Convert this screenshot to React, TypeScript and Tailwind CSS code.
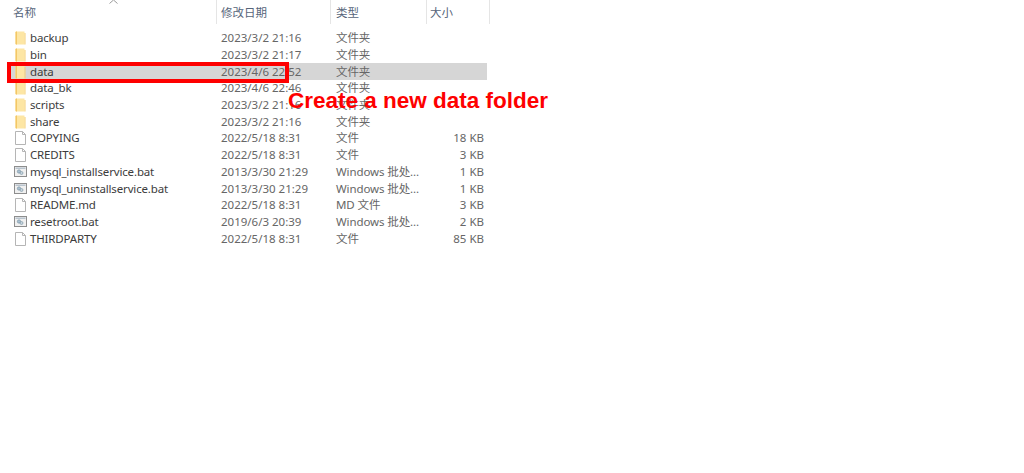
import type { ReactNode } from "react";

type Kind = "folder" | "file" | "bat";

const rows: { name: string; date: string; type: string; size: string; kind: Kind; selected?: boolean }[] = [
  { name: "backup", date: "2023/3/2 21:16", type: "文件夹", size: "", kind: "folder" },
  { name: "bin", date: "2023/3/2 21:17", type: "文件夹", size: "", kind: "folder" },
  { name: "data", date: "2023/4/6 22:52", type: "文件夹", size: "", kind: "folder", selected: true },
  { name: "data_bk", date: "2023/4/6 22:46", type: "文件夹", size: "", kind: "folder" },
  { name: "scripts", date: "2023/3/2 21:16", type: "文件夹", size: "", kind: "folder" },
  { name: "share", date: "2023/3/2 21:16", type: "文件夹", size: "", kind: "folder" },
  { name: "COPYING", date: "2022/5/18 8:31", type: "文件", size: "18 KB", kind: "file" },
  { name: "CREDITS", date: "2022/5/18 8:31", type: "文件", size: "3 KB", kind: "file" },
  { name: "mysql_installservice.bat", date: "2013/3/30 21:29", type: "Windows 批处...", size: "1 KB", kind: "bat" },
  { name: "mysql_uninstallservice.bat", date: "2013/3/30 21:29", type: "Windows 批处...", size: "1 KB", kind: "bat" },
  { name: "README.md", date: "2022/5/18 8:31", type: "MD 文件", size: "3 KB", kind: "file" },
  { name: "resetroot.bat", date: "2019/6/3 20:39", type: "Windows 批处...", size: "2 KB", kind: "bat" },
  { name: "THIRDPARTY", date: "2022/5/18 8:31", type: "文件", size: "85 KB", kind: "file" },
];

function FileIcon({ kind }: { kind: Kind }) {
  if (kind === "folder") {
    return (
      <svg width="11" height="14" viewBox="0 0 11 14">
        <path d="M0.5 1.5 C0.5 0.8 1 0.5 1.5 0.5 H9.5 V13.5 H1.5 C1 13.5 0.5 13.2 0.5 12.5 Z" fill="#fde6a4" />
        <path d="M0.5 1.5 C0.5 0.8 1 0.5 1.5 0.5 H2 V13.5 H1.5 C1 13.5 0.5 13.2 0.5 12.5 Z" fill="#f3c766" />
        <path d="M9.5 2 H10.5 V13.5 H9.5 Z" fill="#f5cf74" />
      </svg>
    );
  }
  if (kind === "file") {
    return (
      <svg width="11" height="14" viewBox="0 0 11 14">
        <path d="M0.5 0.5 H7.5 L10.5 3.5 V13.5 H0.5 Z M7.5 0.5 V3.5 H10.5" fill="#ffffff" stroke="#b5b5b5" />
      </svg>
    );
  }
  return (
    <svg width="13" height="11" viewBox="0 0 13 11">
      <rect x="0.5" y="0.5" width="12" height="10" fill="#f0f0f0" stroke="#8d8d8d" />
      <rect x="1.5" y="1.5" width="10" height="1.5" fill="#b9c4ce" />
      <circle cx="5" cy="5.5" r="1.7" fill="#a9bfd0" stroke="#76909f" strokeWidth="0.6" />
      <circle cx="7.5" cy="7" r="1.5" fill="#c5d3dd" stroke="#76909f" strokeWidth="0.6" />
    </svg>
  );
}

function HeaderCell({ className, children }: { className: string; children: ReactNode }) {
  return <div className={`${className} h-6 pt-[5px] border-r border-[#e5e5e5] text-[#56657a]`}>{children}</div>;
}

export default function App() {
  return (
    <div className="relative w-[1024px] h-[473px] overflow-hidden bg-white font-['Noto_Sans','Noto_Sans_CJK_SC',sans-serif] text-[11.5px] leading-4 text-[#666666]">
      {/* column headers */}
      <div className="relative flex pl-[8px]">
        <HeaderCell className="w-[209px] pl-[5px]">名称</HeaderCell>
        <HeaderCell className="w-[114px] pl-[4px]">修改日期</HeaderCell>
        <HeaderCell className="w-[96px] pl-[5px]">类型</HeaderCell>
        <HeaderCell className="w-[63px] pl-[3px]">大小</HeaderCell>
        <svg className="absolute left-[109px] top-0" width="9" height="4" viewBox="0 0 9 4">
          <path d="M0.5 3.5 L4.5 0 L8.5 3.5" fill="none" stroke="#9a9a9a" />
        </svg>
      </div>

      {/* file list */}
      <div className="ml-[8px] mt-[6px] w-[479px]">
        {rows.map((row) => (
          <div
            key={row.name}
            className={`flex items-center h-[16.7px] ${row.selected ? "bg-[#d6d6d6]" : ""}`}
          >
            <div className="w-[208px] flex items-center">
              <div className="w-[22px] flex justify-center pl-[3px]">
                <FileIcon kind={row.kind} />
              </div>
              <span className="text-[#3c3c3c] tracking-[-0.15px]">{row.name}</span>
            </div>
            <div className="w-[115px] pl-[5px]">{row.date}</div>
            <div className="w-[96px] pl-[5px] whitespace-nowrap tracking-[-0.1px]">{row.type}</div>
            <div className="w-[57px] text-right">{row.size}</div>
          </div>
        ))}
      </div>

      {/* annotation drawn over the list */}
      <div className="absolute left-[7px] top-[62px] w-[282px] h-[21px] border-4 border-[#fe0000]" />
      <div className="absolute left-[288px] top-[89px] font-['Liberation_Sans',sans-serif] font-bold text-[22.5px] leading-6 whitespace-nowrap text-[#fe0000]">
        Create a new data folder
      </div>
    </div>
  );
}
